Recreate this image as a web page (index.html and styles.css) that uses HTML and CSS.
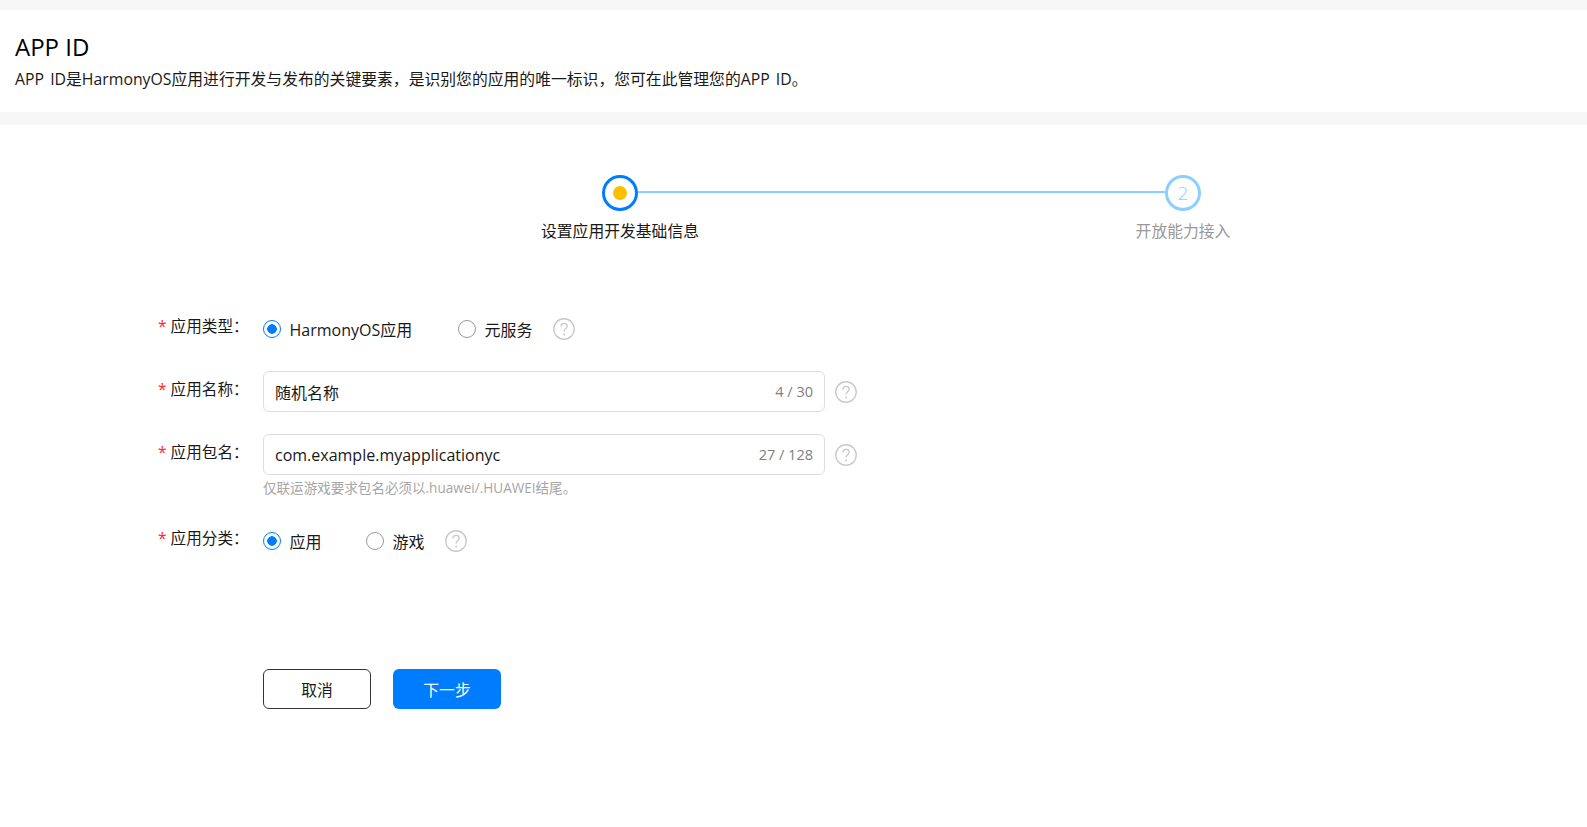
FILE: index.html
```html
<!DOCTYPE html>
<html lang="zh-CN">
<head>
  <meta charset="UTF-8">
  <title>APP ID</title>
  <link rel="stylesheet" href="styles.css">
</head>
<body>

  <div class="page-head">
    <h1>APP ID</h1>
    <p>APP ID是HarmonyOS应用进行开发与发布的关键要素，是识别您的应用的唯一标识，您可在此管理您的APP ID。</p>
  </div>

  <div class="main">
    <!-- 步骤条 -->
    <div class="steps">
      <div class="step step-active">
        <span class="step-circle"><span class="step-dot"></span></span>
        <span class="step-label">设置应用开发基础信息</span>
      </div>
      <div class="step-line"></div>
      <div class="step step-next">
        <span class="step-circle">2</span>
        <span class="step-label">开放能力接入</span>
      </div>
    </div>

    <!-- 表单 -->
    <div class="form">
      <div class="row row-type">
        <label class="row-label"><i>*</i>应用类型：</label>
        <div class="row-body">
          <span class="radio radio-on radio-harmony"><b></b>HarmonyOS应用</span>
          <span class="radio radio-service"><b></b>元服务</span>
          <svg class="help" viewBox="0 0 20 20"><circle cx="10" cy="10" r="9.3"/><path d="M7.2 7.8c0-1.8 1.2-2.9 2.9-2.9 1.6 0 2.8 1.1 2.8 2.5 0 2.2-2.8 2.3-2.8 4.8"/><circle class="help-dot" cx="10.1" cy="15" r=".9"/></svg>
        </div>
      </div>

      <div class="row row-name">
        <label class="row-label"><i>*</i>应用名称：</label>
        <div class="row-body">
          <div class="input"><span class="input-text">随机名称</span><span class="count">4 / 30</span></div>
          <svg class="help" viewBox="0 0 20 20"><circle cx="10" cy="10" r="9.3"/><path d="M7.2 7.8c0-1.8 1.2-2.9 2.9-2.9 1.6 0 2.8 1.1 2.8 2.5 0 2.2-2.8 2.3-2.8 4.8"/><circle class="help-dot" cx="10.1" cy="15" r=".9"/></svg>
        </div>
      </div>

      <div class="row row-package">
        <label class="row-label"><i>*</i>应用包名：</label>
        <div class="row-body">
          <div class="input"><span class="input-text">com.example.myapplicationyc</span><span class="count">27 / 128</span></div>
          <svg class="help" viewBox="0 0 20 20"><circle cx="10" cy="10" r="9.3"/><path d="M7.2 7.8c0-1.8 1.2-2.9 2.9-2.9 1.6 0 2.8 1.1 2.8 2.5 0 2.2-2.8 2.3-2.8 4.8"/><circle class="help-dot" cx="10.1" cy="15" r=".9"/></svg>
        </div>
      </div>
      <p class="hint">仅联运游戏要求包名必须以.huawei/.HUAWEI结尾。</p>

      <div class="row row-category">
        <label class="row-label"><i>*</i>应用分类：</label>
        <div class="row-body">
          <span class="radio radio-on radio-app"><b></b>应用</span>
          <span class="radio radio-game"><b></b>游戏</span>
          <svg class="help" viewBox="0 0 20 20"><circle cx="10" cy="10" r="9.3"/><path d="M7.2 7.8c0-1.8 1.2-2.9 2.9-2.9 1.6 0 2.8 1.1 2.8 2.5 0 2.2-2.8 2.3-2.8 4.8"/><circle class="help-dot" cx="10.1" cy="15" r=".9"/></svg>
        </div>
      </div>

      <div class="actions">
        <button class="btn btn-cancel">取消</button>
        <button class="btn btn-next">下一步</button>
      </div>
    </div>
  </div>

</body>
</html>
```

FILE: styles.css
```css
* {
  box-sizing: border-box;
}

html,
body {
  height: 100%;
}

body {
  margin: 0;
  padding-top: 10px;
  background-color: #f7f7f7;
  color: #191919;
  font-family: "Open Sans", "Noto Sans CJK SC", sans-serif;
  font-size: 16px;
  overflow: hidden;
}

.page-head {
  height: 102px;
  padding: 23px 15px 0;
  background-color: #fff;
  margin-bottom: 13px;
}

.page-head h1 {
  margin: 0;
  font-size: 24px;
  font-weight: 400;
  line-height: 28px;
  color: #000;
}

.page-head p {
  margin: 3px 0 0;
  line-height: 30px;
  font-size: 15.82px;
  word-spacing: 2px;
}

.main {
  background-color: #fff;
  height: 702px;
  padding-top: 50px;
}

/* steps */
.steps {
  display: flex;
  align-items: flex-start;
  width: 723px;
  margin-left: 540px;
}

.step {
  display: flex;
  flex-direction: column;
  align-items: center;
  width: 160px;
  flex: none;
  margin: 0 -62px;
}

.step-active {
  margin-left: 0;
}

.step-next {
  margin-right: 0;
}

.step-circle {
  display: flex;
  align-items: center;
  justify-content: center;
  width: 36px;
  height: 36px;
  border-radius: 50%;
  background-color: #fff;
  position: relative;
  z-index: 1;
}

.step-active .step-circle {
  border: 3px solid #007dff;
}

.step-next .step-circle {
  border: 3px solid #8ccfff;
  color: #8ccfff;
  font-size: 19px;
  font-weight: 300;
}

.step-dot {
  width: 14px;
  height: 14px;
  border-radius: 50%;
  background-color: #ffbf00;
}

.step-label {
  margin-top: 8px;
  font-size: 15.8px;
  line-height: 24px;
  white-space: nowrap;
}

.step-next .step-label {
  color: #999;
}

.step-line {
  flex: 1;
  height: 2px;
  margin-top: 16px;
  background-color: #8ccfff;
}

/* form */
.form {
  margin-top: 65px;
  padding-left: 158px;
}

.row {
  display: flex;
  align-items: center;
  min-height: 41px;
  margin-bottom: 22px;
}

.row-label {
  width: 105px;
  flex: none;
  font-size: 15.6px;
  margin-top: -6px;
  white-space: nowrap;
}

.row-label i {
  color: #fa2a2d;
  font-style: normal;
  margin-right: 4px;
}

.row-body {
  display: flex;
  align-items: center;
}

.radio {
  display: flex;
  align-items: center;
  font-size: 16px;
  white-space: nowrap;
}

.radio b {
  width: 18px;
  height: 18px;
  flex: none;
  border: 1px solid #999;
  border-radius: 50%;
  margin-right: 8.5px;
  background-color: #fff;
}

.radio-on b {
  border-color: #007dff;
  background: radial-gradient(circle, #007dff 0 4.5px, #fff 5px);
}

.radio-harmony {
  width: 195px;
}

.radio-service {
  width: 95px;
}

.radio-app {
  width: 103px;
}

.radio-game {
  width: 79px;
}

.help {
  width: 22px;
  height: 22px;
  flex: none;
}

.help circle,
.help path {
  fill: none;
  stroke: #c8c8c8;
  stroke-width: 1.2;
}

.help .help-dot {
  fill: #c8c8c8;
  stroke: none;
}

.input {
  display: flex;
  align-items: center;
  justify-content: space-between;
  width: 562px;
  height: 41px;
  padding: 0 11px;
  margin-right: 10px;
  border: 1px solid #dcdce4;
  border-radius: 6px;
}

.count {
  color: #808080;
  font-size: 14.5px;
}

.row-package {
  margin-bottom: 0;
}

.hint {
  margin: 3px 0 0 105px;
  height: 20px;
  font-size: 13.55px;
  line-height: 20px;
  color: #a6a6a6;
}

.row-category {
  margin-top: 22px;
}

.actions {
  display: flex;
  gap: 22px;
  margin: 108px 0 0 105px;
}

.btn {
  width: 108px;
  height: 40px;
  border-radius: 6px;
  font-family: inherit;
  font-size: 15.8px;
  padding: 0;
}

.btn-cancel {
  background-color: #fff;
  color: #191919;
  border: 1px solid #333;
}

.btn-next {
  background-color: #007dff;
  color: #fff;
  border: none;
}
```
